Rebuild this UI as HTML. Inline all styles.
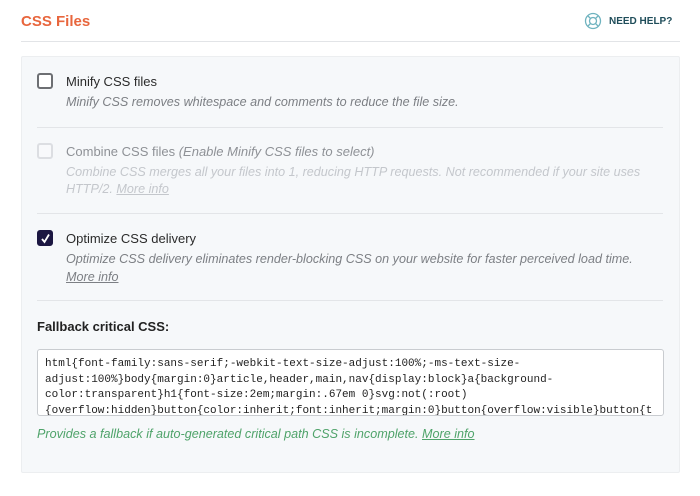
<!DOCTYPE html>
<html><head><meta charset="utf-8"><style>
*{margin:0;padding:0;box-sizing:border-box}
body{width:700px;height:496px;background:#fff;font-family:"Liberation Sans",sans-serif;position:relative;overflow:hidden}
.a{position:absolute;white-space:nowrap}
.t{font-size:13px;color:#2b2b2b}
.d{font-size:12.6px;font-style:italic;color:#7c7f84}
.dis{color:#c4c7cc}
.cb{position:absolute;width:16px;height:16px;border:2px solid #6d6f73;border-radius:3px;background:#fff}
.sep{position:absolute;left:37px;width:626px;height:1px;background:#e3e5e8}
u{text-decoration:underline}
</style></head><body>
<div class="a" style="left:21px;top:13px;font-size:15px;font-weight:bold;color:#e8663d">CSS Files</div>
<svg class="a" style="left:584px;top:12px" width="18" height="18" viewBox="0 0 18 18" fill="none" stroke="#6fb3bf" stroke-width="1.3"><circle cx="9" cy="9" r="7.5"/><circle cx="9" cy="9" r="3.5"/><path d="M4 4l2.5 2.5M14 4l-2.5 2.5M4 14l2.5-2.5M14 14l-2.5-2.5"/></svg>
<div class="a" style="left:609px;top:16px;font-size:10px;font-weight:bold;color:#1f4d5a">NEED HELP?</div>
<div class="a" style="left:21px;top:41px;width:659px;height:1px;background:#e2e4e7"></div>
<div class="a" style="left:21px;top:56px;width:659px;height:417px;background:#f6f8fa;border:1px solid #eceef0;border-radius:2px"></div>

<div class="cb" style="left:37px;top:73px"></div>
<div class="a t" style="left:66px;top:74px">Minify CSS files</div>
<div class="a d" style="left:66px;top:95px">Minify CSS removes whitespace and comments to reduce the file size.</div>
<div class="sep" style="top:127px"></div>

<div class="cb" style="left:37px;top:143px;border-color:#dcdee2;background:#f8f9fb"></div>
<div class="a t" style="left:66px;top:144px;color:#8e9196">Combine CSS files <i>(Enable Minify CSS files to select)</i></div>
<div class="a d dis" style="left:66px;top:165px">Combine CSS merges all your files into 1, reducing HTTP requests. Not recommended if your site uses</div>
<div class="a d dis" style="left:66px;top:182px">HTTP/2. <u>More info</u></div>
<div class="sep" style="top:213px"></div>

<div class="cb" style="left:37px;top:230px;background:#1c1742;border-color:#1c1742"></div>
<svg class="a" style="left:40px;top:233px" width="11" height="11" viewBox="0 0 11 11"><path d="M2 6l2.5 3L9 1.5" fill="none" stroke="#fff" stroke-width="1.8"/></svg>
<div class="a t" style="left:66px;top:231px">Optimize CSS delivery</div>
<div class="a d" style="left:66px;top:252px">Optimize CSS delivery eliminates render-blocking CSS on your website for faster perceived load time.</div>
<div class="a d" style="left:66px;top:270px"><u>More info</u></div>
<div class="sep" style="top:300px"></div>

<div class="a" style="left:37px;top:319px;font-size:13px;font-weight:bold;color:#222">Fallback critical CSS:</div>
<div class="a" style="left:37px;top:349px;width:627px;height:67px;background:#fff;border:1px solid #c9ccd0;border-radius:3px;overflow:hidden;padding:7px 0 0 7px;font-family:'Liberation Mono',monospace;font-size:11px;line-height:15.5px;color:#222;white-space:pre">html{font-family:sans-serif;-webkit-text-size-adjust:100%;-ms-text-size-
adjust:100%}body{margin:0}article,header,main,nav{display:block}a{background-
color:transparent}h1{font-size:2em;margin:.67em 0}svg:not(:root)
{overflow:hidden}button{color:inherit;font:inherit;margin:0}button{overflow:visible}button{t
ext-transform:none}</div>
<div class="a d" style="left:37px;top:427px;color:#4fa36a">Provides a fallback if auto-generated critical path CSS is incomplete. <u>More info</u></div>
</body></html>
